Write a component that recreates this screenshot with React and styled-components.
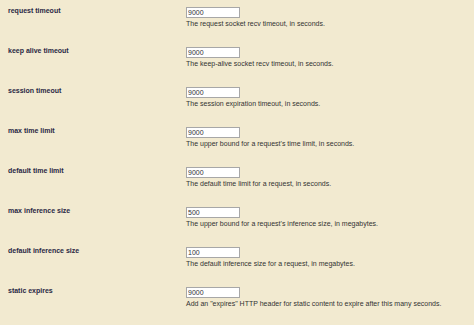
import React from "react";
import styled, { createGlobalStyle } from "styled-components";

const GlobalStyle = createGlobalStyle`
  html, body {
    margin: 0;
    padding: 0;
    background: #f2ead0;
  }
`;

const settings = [
  { label: "request timeout", value: "9000", help: "The request socket recv timeout, in seconds." },
  { label: "keep alive timeout", value: "9000", help: "The keep-alive socket recv timeout, in seconds." },
  { label: "session timeout", value: "9000", help: "The session expiration timeout, in seconds." },
  { label: "max time limit", value: "9000", help: "The upper bound for a request's time limit, in seconds." },
  { label: "default time limit", value: "9000", help: "The default time limit for a request, in seconds." },
  { label: "max inference size", value: "500", help: "The upper bound for a request's inference size, in megabytes." },
  { label: "default inference size", value: "100", help: "The default inference size for a request, in megabytes." },
  {
    label: "static expires",
    value: "9000",
    help: 'Add an "expires" HTTP header for static content to expire after this many seconds.',
  },
];

export default function App() {
  return (
    <>
      <GlobalStyle />
      <Page>
        {settings.map((s) => (
          <Row key={s.label}>
            <Label>{s.label}</Label>
            <Field>
              <Input defaultValue={s.value} />
              <Help>{s.help}</Help>
            </Field>
          </Row>
        ))}
      </Page>
    </>
  );
}

const Page = styled.div`
  width: 474px;
  height: 325px;
  padding: 7px 0 0 8px;
  box-sizing: border-box;
  background: #f2ead0;
  font-family: "Liberation Sans", Arial, sans-serif;
`;

const Row = styled.div`
  display: grid;
  grid-template-columns: 178px 1fr;
  height: 40px;
`;

const Label = styled.div`
  font-weight: bold;
  font-size: 7px;
  line-height: 8px;
  color: #2a2844;
`;

const Field = styled.div`
  display: flex;
  flex-direction: column;
  align-items: flex-start;
`;

const Input = styled.input`
  box-sizing: border-box;
  width: 54px;
  height: 11px;
  margin: 0;
  padding: 0 1px;
  border: 1px solid #a7a7a7;
  background: #ffffff;
  font-family: "Liberation Sans", Arial, sans-serif;
  font-size: 7px;
  color: #333;
  outline: none;
`;

const Help = styled.div`
  margin-top: 2px;
  font-size: 7px;
  line-height: 8px;
  color: #333333;
  white-space: nowrap;
`;
